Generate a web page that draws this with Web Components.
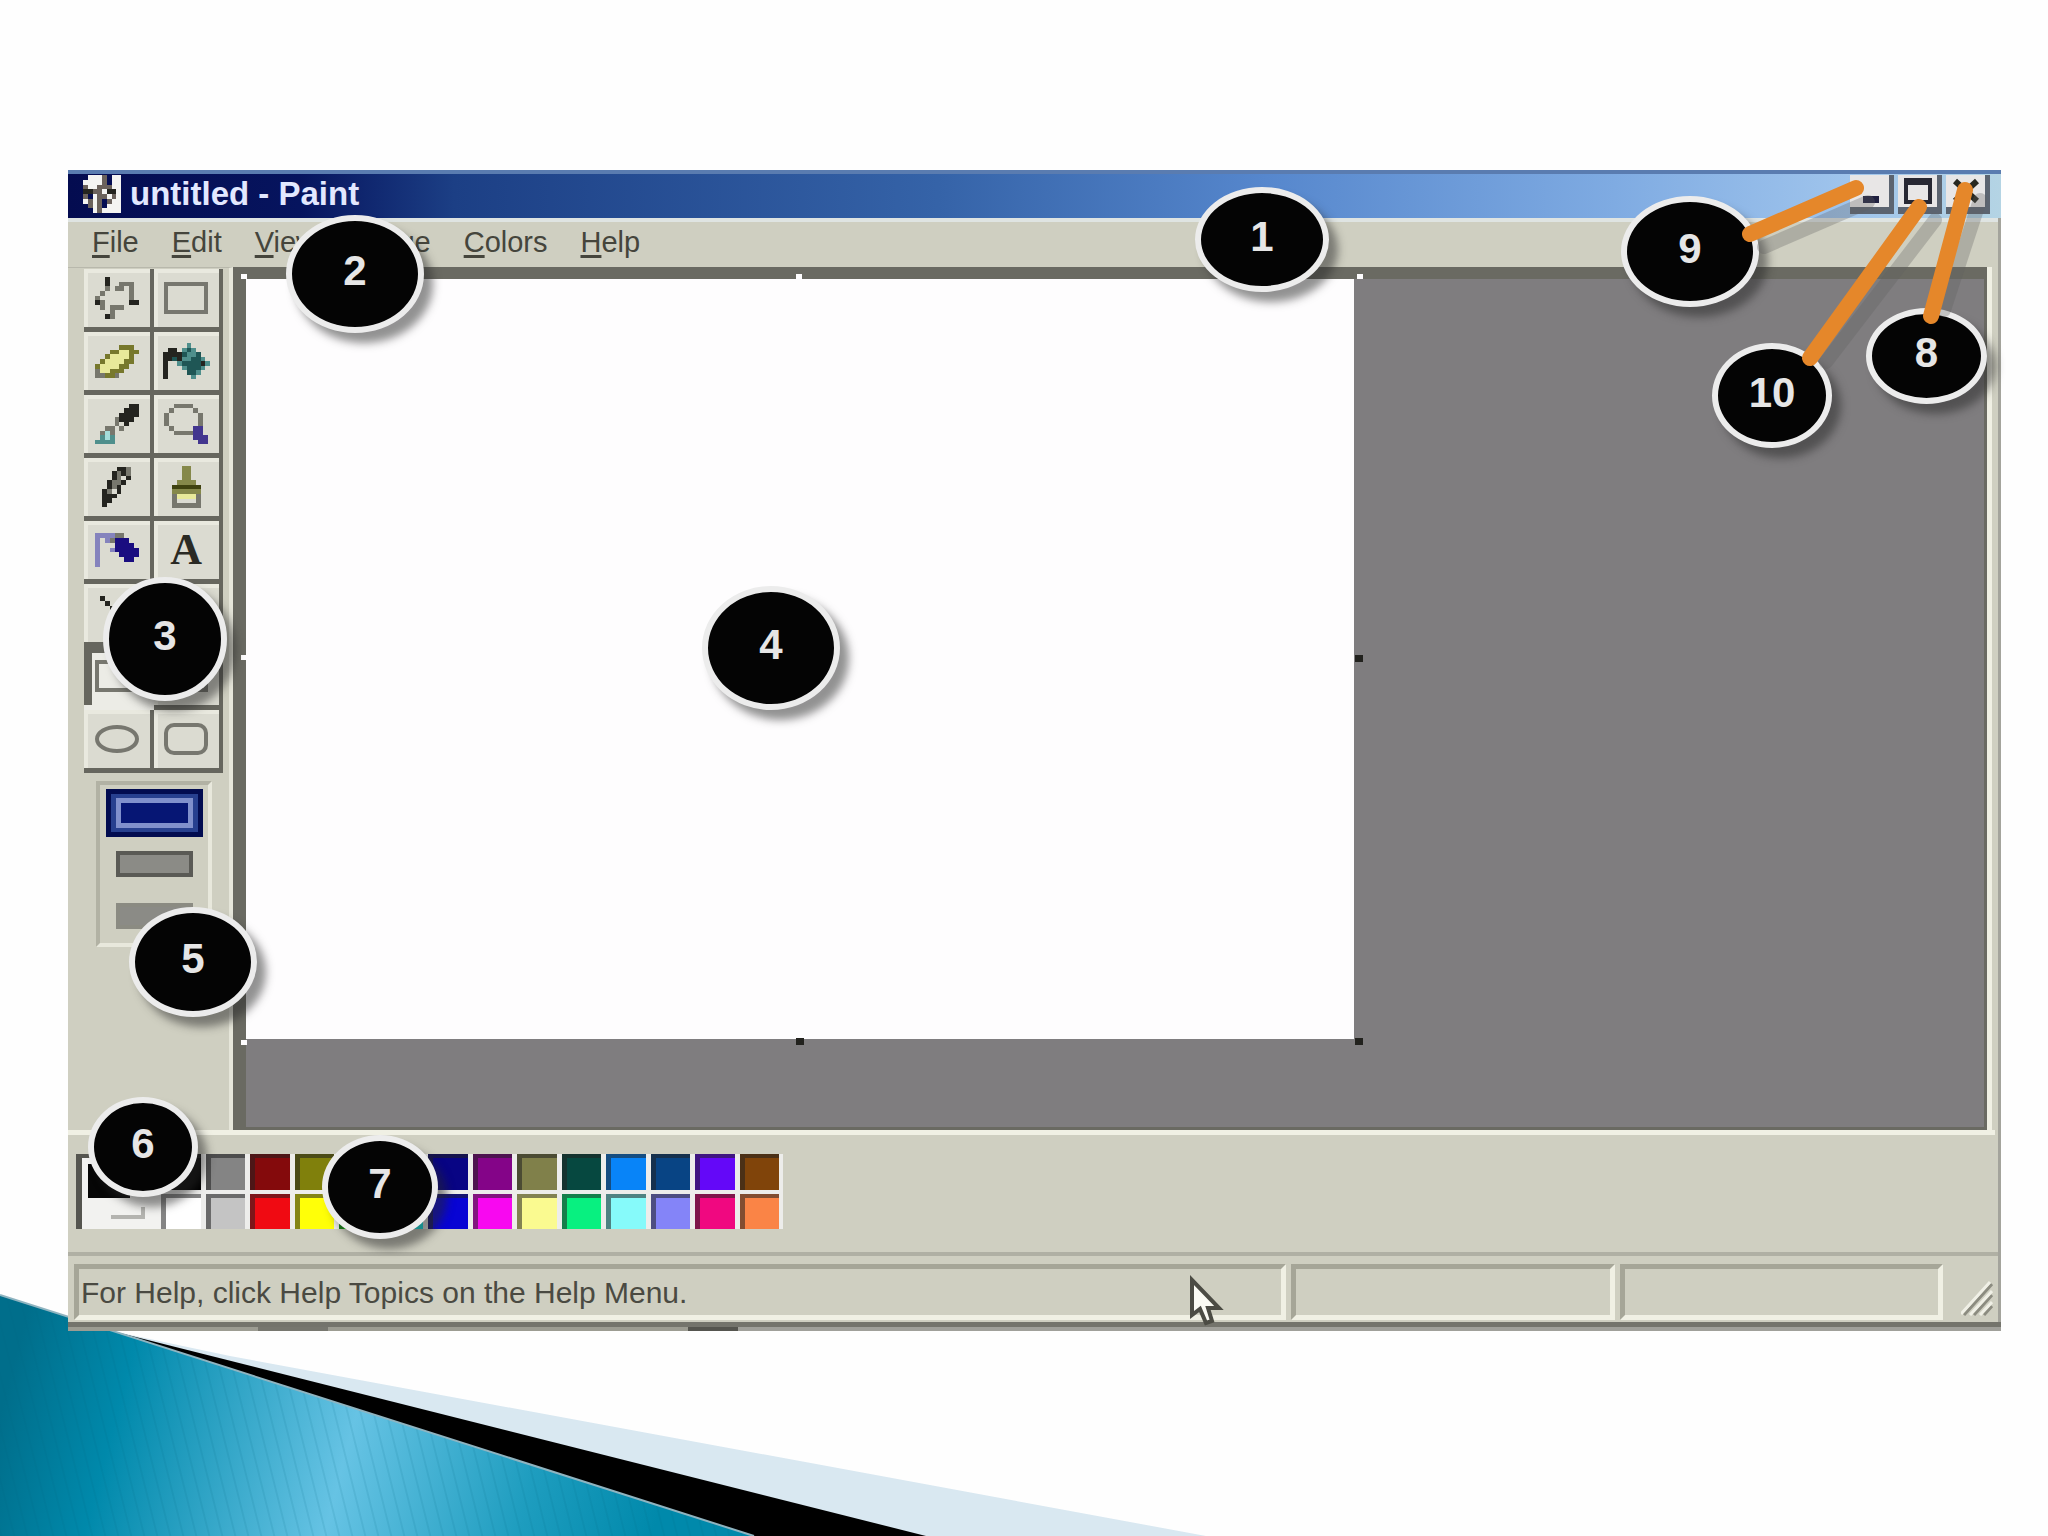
<!DOCTYPE html>
<html lang="en">
<head>
<meta charset="utf-8">
<title>Paint</title>
<style>
  body {
    margin: 0;
    background: #fefefe;
    font-family: "Liberation Sans", Arial, sans-serif;
    --face: #cfcfc1;
    --light: #f0f0e4;
    --shade: #a6a698;
    --dark: #66665e;
  }
</style>
</head>
<body>
<lesson-slide>
  <paint-window>
    <title-bar slot="title">untitled - Paint</title-bar>
    <menu-bar slot="menu"></menu-bar>
    <tool-box slot="tools"></tool-box>
    <paint-canvas slot="canvas"></paint-canvas>
    <color-palette slot="colors"></color-palette>
    <status-bar slot="status">For Help, click Help Topics on the Help Menu.</status-bar>
  </paint-window>
  <callout-layer slot="overlay"></callout-layer>
</lesson-slide>

<script>
const PIXEL_COLORS = {
  k: "#24241f", g: "#77776d", w: "#f4f4f2", y: "#77782c", L: "#e8e99a",
  t: "#4f8f8c", T: "#1f5655", C: "#a4dcda", n: "#43368f", N: "#1a0d80",
  v: "#8583bd", o: "#85884a", O: "#3f4210", b: "#6b625c",
};

// Turns rows of colour letters into crisp rects, one per pixel.
function pixelIcon(rows, width, height) {
  const cols = Math.max(...rows.map((row) => row.length));
  let rects = "";
  rows.forEach((row, y) => {
    [...row].forEach((key, x) => {
      if (PIXEL_COLORS[key]) {
        rects += `<rect x="${x}" y="${y}" width="1" height="1" fill="${PIXEL_COLORS[key]}"/>`;
      }
    });
  });
  return `<svg viewBox="0 0 ${cols} ${rows.length}" width="${width}" height="${height}" preserveAspectRatio="none" shape-rendering="crispEdges" aria-hidden="true">${rects}</svg>`;
}

function outlineIcon(shape, width = 44, height = 32) {
  return `<svg viewBox="0 0 44 32" width="${width}" height="${height}" fill="none" stroke="#77776f" stroke-width="4" aria-hidden="true">${shape}</svg>`;
}

const TOOLS = [
  ["Free-form select", pixelIcon(["..k......", "..k..ggg.", "..g.gg.g.", ".g.....g.", "g......g.", "kg.....kk", ".g.ggg...", "...g.....", "..kg....."], 44, 42)],
  ["Select", outlineIcon('<rect x="2" y="2" width="40" height="28"/>')],
  ["Eraser", pixelIcon([".....yyy.", "...yyLLyy", "..yLLLLy.", ".yLLLLyy.", "yLLLLyy..", "gLLyyy...", "ggyyg...."], 44, 33)],
  ["Fill", pixelIcon([".....t....", ".kk.tTt...", "kkkkTttT..", "kkTkttTTt.", "k..tTTTTkt", "k...tTTTt.", "k....TTt..", "k.....t..."], 47, 36)],
  ["Pick color", pixelIcon([".......kk", "......kkk", ".....kkkk", "....gkkk.", "....g.k..", "..gg.g...", ".gCg.....", ".tCt.....", "tttt....."], 44, 40)],
  ["Magnifier", pixelIcon(["..gggg...", ".g....g..", "g......g.", "g......g.", "g......g.", ".g....nn.", "..ggggnn.", "......nnn", ".......nn"], 44, 40)],
  ["Pencil", pixelIcon(["...kkg", "..kgkg", "..kg.k", ".kggk.", ".kgk..", "kg.k..", "kkk...", "kk....", "k....."], 29, 40)],
  ["Brush", pixelIcon(["..oo..", "..oo..", "..oo..", ".oooo.", "OOOOOO", "oooooo", "gLLLLg", "g....g", "gggggg"], 29, 42)],
  ["Airbrush", pixelIcon(["vvvvgg...", "v.vgNNN..", "v...NNNN.", "v..vNNNNN", "v....NNNN", "v.....NN.", "v........"], 44, 34)],
  ["Text", "<b>A</b>"],
  ["Line", pixelIcon([".k.......", "..k......", "...k.....", "....k....", ".....k...", "......k..", ".......k."], 44, 34)],
  ["Curve", outlineIcon('<path d="M2 2c30 0 10 28 40 28"/>')],
  ["Rectangle", outlineIcon('<rect x="2" y="2" width="40" height="28"/>')],
  ["Polygon", outlineIcon('<path d="M2 2v28h40V14H22V2Z"/>')],
  ["Ellipse", outlineIcon('<ellipse cx="22" cy="16" rx="20" ry="12"/>')],
  ["Rounded rectangle", outlineIcon('<rect x="2" y="2" width="40" height="28" rx="8"/>')],
];

const PALETTE = [
  ["#000000", "#ffffff"], ["#848484", "#c4c4c4"], ["#840a0c", "#f00a12"],
  ["#80800c", "#ffff08"], ["#0a7a0c", "#0af00c"], ["#0a7c80", "#0af0f0"],
  ["#080484", "#0804d4"], ["#840488", "#f808f0"], ["#80804a", "#fafa90"],
  ["#064840", "#08f080"], ["#0884f8", "#86fafa"], ["#084484", "#8484f8"],
  ["#6408f8", "#f00880"], ["#80440a", "#fa8446"],
];

class LessonSlide extends HTMLElement {
  connectedCallback() {
    this.attachShadow({ mode: "open" }).innerHTML = `
      <style>
        :host {
          position: relative;
          display: block;
          box-sizing: border-box;
          min-height: 100vh;
          padding: 170px 47px 0 68px;
          overflow: hidden;
        }
        .swoosh {
          position: absolute;
          bottom: 0;
          left: 0;
        }
        .content { position: relative; }
      </style>
      <svg class="swoosh" width="1210" height="242" viewBox="0 0 1210 242" aria-hidden="true">
        <defs>
          <linearGradient id="teal" gradientUnits="userSpaceOnUse" x1="0" y1="120" x2="640" y2="290">
            <stop offset="0" stop-color="#006e8b"/>
            <stop offset="0.17" stop-color="#0089ab"/>
            <stop offset="0.52" stop-color="#66c3e4"/>
            <stop offset="0.8" stop-color="#1e9dbf"/>
            <stop offset="1" stop-color="#0089ab"/>
          </linearGradient>
          <pattern id="lines" width="13" height="40" patternUnits="userSpaceOnUse" patternTransform="skewX(14)">
            <path d="M6 0v40" stroke="#00627f" stroke-opacity="0.22" stroke-width="1"/>
          </pattern>
        </defs>
        <path fill="#d9e8f1" d="M112 37 230 62 1206 242H750Z"/>
        <path fill="#000" d="M112 37 926 242H750Z"/>
        <path fill="url(#teal)" d="M0 1 754 242H0Z"/>
        <path fill="url(#lines)" d="M0 1 754 242H0Z"/>
        <path fill="none" stroke="#8fb4c0" stroke-width="2" d="M0 1 754 242"/>
      </svg>
      <div class="content">
        <slot></slot>
      </div>
      <slot name="overlay"></slot>
    `;
  }
}

class PaintWindow extends HTMLElement {
  connectedCallback() {
    this.attachShadow({ mode: "open" }).innerHTML = `
      <style>
        :host {
          display: block;
          border-right: 3px solid #a4a49c;
          background: var(--face);
        }
        .work {
          display: grid;
          grid-template-columns: 165px 1fr;
          margin-right: 3px;
          border-bottom: 5px solid var(--light);
        }
        .edge {
          height: 4px;
          margin-right: -3px;
          border-top: 5px solid #74746c;
          background: linear-gradient(90deg, #9c9c92 190px, #77776f 190px 260px, #9c9c92 260px 620px, #55554f 620px 670px, #a0a09a 670px);
        }
      </style>
      <slot name="title"></slot>
      <slot name="menu"></slot>
      <div class="work">
        <slot name="tools"></slot>
        <slot name="canvas"></slot>
      </div>
      <slot name="colors"></slot>
      <slot name="status"></slot>
      <div class="edge"></div>
    `;
  }
}

class TitleBar extends HTMLElement {
  connectedCallback() {
    const mark = pixelIcon([".wwwb.ww", "wwwwb.ww", "bwwbbbww", "kkbbwkkw", "b.wbbwbw", "wbwb.bww", ".bwb.www", "..wbwwww"], 38, 38);
    this.attachShadow({ mode: "open" }).innerHTML = `
      <style>
        :host {
          display: flex;
          box-sizing: border-box;
          height: 48px;
          align-items: center;
          margin-right: -3px;
          padding: 0 11px 4px 15px;
          border-top: 4px solid #5a7cb0;
          background: linear-gradient(90deg, #040c50, #06145e 12%, #1c3f85 20%, #3563a8 45%, #5687cd 62%, #7fabe2 80%, #9fc4ec 92%, #b4d4e4);
          color: #e2e8ff;
        }
        svg { display: block; }
        .title {
          flex: 1;
          margin-left: 9px;
          font-size: 33px;
          font-weight: bold;
          line-height: 40px;
        }
        .controls {
          display: flex;
          gap: 4px;
        }
        button {
          display: grid;
          width: 44px;
          height: 39px;
          padding: 0;
          place-items: center;
          border: 0;
          border-right: 5px solid #5c6470;
          border-bottom: 7px solid #5c6470;
          background: #e8e6e6;
        }
      </style>
      ${mark}
      <span class="title"><slot></slot></span>
      <div class="controls">
        <button aria-label="Minimize"><svg width="28" height="26"><path fill="#202040" d="M7 18h16v7H7z"/></svg></button>
        <button aria-label="Maximize"><svg width="28" height="26"><path fill="#282833" d="M0 0h28v26H0zM4 7v15h20V7z" fill-rule="evenodd"/></svg></button>
        <button aria-label="Close"><svg width="28" height="26"><path stroke="#282820" stroke-width="6" d="M3 3 25 23M25 3 3 23"/></svg></button>
      </div>
    `;
  }
}

class MenuBar extends HTMLElement {
  connectedCallback() {
    const items = ["File", "Edit", "View", "Image", "Colors", "Help"];
    this.attachShadow({ mode: "open" }).innerHTML = `
      <style>
        :host {
          display: flex;
          box-sizing: border-box;
          height: 49px;
          align-items: flex-start;
          gap: 33px;
          padding-left: 24px;
          border-top: 4px solid #dfe4e2;
        }
        button {
          padding: 0;
          border: 0;
          background: none;
          color: #45453c;
          font: 29px/40px "Liberation Sans", Arial, sans-serif;
        }
        u {
          text-decoration-thickness: 3px;
          text-underline-offset: 3px;
        }
      </style>
      ${items.map((name) => `<button><u>${name[0]}</u>${name.slice(1)}</button>`).join("")}
    `;
  }
}

class ToolBox extends HTMLElement {
  connectedCallback() {
    const buttons = TOOLS.map(([name, icon]) =>
      `<button aria-label="${name}" aria-pressed="${name === "Rectangle"}">${icon}</button>`).join("");
    this.attachShadow({ mode: "open" }).innerHTML = `
      <style>
        :host {
          display: block;
          padding: 1px 6px 0 16px;
          border-top: 1px solid #b8b8ac;
          border-right: 4px solid #e6e6da;
        }
        .tools {
          display: grid;
          grid-template-columns: repeat(2, 1fr);
          grid-auto-rows: 63px;
        }
        button {
          display: grid;
          place-items: center;
          padding: 0;
          border: 0;
          background: none;
        }
        .tools button {
          border: solid var(--dark);
          border-width: 0 4px 5px 0;
          background: #dbdbd1;
          box-shadow: inset 4px 4px #e9e9df;
        }
        .tools button[aria-pressed="true"] {
          border-color: #ecece6;
          background: #ecece6;
          box-shadow: inset 8px 6px var(--dark);
        }
        svg { display: block; }
        b {
          color: #2a2a24;
          font: bold 44px/50px "Liberation Serif", "Times New Roman", serif;
        }
        .styles {
          display: grid;
          box-sizing: border-box;
          width: 116px;
          height: 166px;
          align-content: start;
          justify-items: center;
          gap: 14px;
          margin: 8px 0 0 12px;
          padding-top: 4px;
          border: 4px solid;
          border-color: #b2b2a4 #e8e8dc #e8e8dc #b2b2a4;
        }
        .styles button {
          width: 77px;
          height: 26px;
          border: 4px solid #5a5a55;
          background: #8b8b86;
        }
        .styles .outline {
          width: 97px;
          height: 48px;
          border: 5px solid #020c50;
          background: #27408f;
        }
        .outline span {
          width: 67px;
          height: 20px;
          border: 5px solid #8090cc;
          background: #061674;
        }
        .styles .solid {
          margin-top: 12px;
          border-color: #8b8b82;
        }
      </style>
      <div class="tools">${buttons}</div>
      <div class="styles">
        <button class="outline" aria-label="Outline"><span></span></button>
        <button aria-label="Outline and fill"></button>
        <button class="solid" aria-label="Fill only"></button>
      </div>
    `;
  }
}

class PaintCanvas extends HTMLElement {
  connectedCallback() {
    this.attachShadow({ mode: "open" }).innerHTML = `
      <style>
        :host {
          display: block;
          padding-bottom: 88px;
          border: solid #6a6a62;
          border-width: 12px 3px 3px 13px;
          background: #7f7d7f;
          box-shadow: 5px 0 var(--light);
          margin-right: 8px;
        }
        .page {
          position: relative;
          width: 1108px;
          height: 760px;
          background: #fefdfe;
        }
        i {
          position: absolute;
          width: 8px;
          height: 7px;
          background: #22221e;
        }
        .e { right: -9px; }
        .s { bottom: -6px; }
        .mid-x { left: 550px; }
        .mid-y { top: 376px; }
        .light {
          width: 6px;
          height: 5px;
          background: #fefdfe;
        }
        .n { top: -5px; }
        .w { left: -5px; }
      </style>
      <div class="page">
        <i class="light n w"></i><i class="light n mid-x"></i><i class="light n e"></i>
        <i class="light w mid-y"></i><i class="e mid-y"></i>
        <i class="light w s"></i><i class="s mid-x"></i><i class="s e"></i>
      </div>
    `;
  }
}

class ColorPalette extends HTMLElement {
  connectedCallback() {
    const row = (index) => PALETTE.map((pair) =>
      `<button aria-label="Color ${pair[index]}" style="--swatch: ${pair[index]}"></button>`).join("");
    this.attachShadow({ mode: "open" }).innerHTML = `
      <style>
        :host {
          display: flex;
          height: 75px;
          padding: 19px 8px 23px;
          border-bottom: 4px solid #b0b0a4;
        }
        .current {
          position: relative;
          box-sizing: border-box;
          width: 85px;
          border: solid #55554f;
          border-width: 4px 0 0 6px;
          background: #f2f2f0;
        }
        .fore, .back {
          position: absolute;
          width: 42px;
          height: 34px;
        }
        .fore { top: 6px; left: 6px; background: #060606; }
        .back { right: 16px; bottom: 10px; width: 34px; height: 12px; box-sizing: border-box; border: solid #b4b4b0; border-width: 0 4px 4px 0; }
        .swatches {
          display: grid;
          width: 618px;
          grid-template-columns: repeat(14, 1fr);
          gap: 4px 5px;
          padding-right: 4px;
          background: #ededeb;
        }
        button {
          padding: 0;
          border: solid color-mix(in srgb, var(--swatch) 45%, #202020);
          border-width: 4px 0 0 5px;
          background: var(--swatch);
        }
      </style>
      <div class="current"><span class="back"></span><span class="fore"></span></div>
      <div class="swatches">${row(0)}${row(1)}</div>
    `;
  }
}

class StatusBar extends HTMLElement {
  connectedCallback() {
    this.attachShadow({ mode: "open" }).innerHTML = `
      <style>
        :host {
          display: grid;
          grid-template-columns: 1212px 1fr 1fr 45px;
          gap: 5px;
          padding: 8px 5px 2px 6px;
        }
        div {
          box-sizing: border-box;
          height: 56px;
          padding-left: 2px;
          border: 5px solid;
          border-color: var(--shade) var(--light) var(--light) var(--shade);
          color: #4a4a42;
          font-size: 30px;
          line-height: 48px;
          white-space: nowrap;
        }
        svg {
          align-self: end;
          justify-self: end;
          margin-bottom: 4px;
        }
      </style>
      <div role="status"><slot></slot></div>
      <div></div>
      <div></div>
      <svg width="32" height="36" viewBox="0 0 32 36" stroke-width="3" aria-hidden="true">
        <path stroke="#8c8c80" d="M3 35 31 4M13 35 31 15M23 35 31 26"/>
        <path stroke="#f0f0e6" d="M0 34 29 2M9 35 31 11M19 35 31 22"/>
      </svg>
    `;
  }
}

// Numbered badges pinned over the parts of the window: label, left, top, width, height.
const CALLOUTS = [
  [1, 1195, 187, 134, 105], [2, 286, 215, 138, 118], [3, 103, 577, 124, 124],
  [4, 702, 586, 138, 124], [5, 129, 907, 128, 110], [6, 88, 1097, 110, 100],
  [7, 322, 1135, 116, 104], [8, 1866, 308, 121, 96], [9, 1621, 196, 138, 111],
  [10, 1712, 343, 120, 105],
];

class CalloutLayer extends HTMLElement {
  connectedCallback() {
    const badges = CALLOUTS.map(([label, left, top, width, height]) =>
      `<span style="left: ${left}px; top: ${top}px; width: ${width}px; height: ${height}px">${label}</span>`).join("");
    this.attachShadow({ mode: "open" }).innerHTML = `
      <style>
        :host {
          position: absolute;
          inset: 0;
          pointer-events: none;
        }
        span {
          position: absolute;
          display: grid;
          box-sizing: border-box;
          place-items: center;
          padding-bottom: 6px;
          border: 6px solid #ececec;
          border-radius: 50%;
          background: #040404;
          box-shadow: 9px 10px 8px rgba(40, 40, 40, 0.5);
          color: #e6e6e6;
          font-size: 42px;
          font-weight: bold;
          line-height: 44px;
        }
        svg {
          position: absolute;
          top: 0;
          left: 0;
        }
      </style>
      ${badges}
      <svg width="2048" height="1536" aria-hidden="true">
        <g stroke-linecap="round" stroke-width="14" fill="none">
          <path stroke="#606060" stroke-opacity="0.3" d="M1764 247 1868 202M1826 362 1935 220M1944 310 1980 200"/>
          <path stroke="#e5872a" stroke-width="16" d="M1750 234 1856 188M1810 358 1919 207M1931 316 1965 190"/>
        </g>
        <path fill="#fbfbf4" stroke="#4c4c44" stroke-width="4" d="M1192 1280v35l8-6 6 14 6-2-4-13h11Z"/>
      </svg>
    `;
  }
}

customElements.define("lesson-slide", LessonSlide);
customElements.define("paint-window", PaintWindow);
customElements.define("title-bar", TitleBar);
customElements.define("menu-bar", MenuBar);
customElements.define("tool-box", ToolBox);
customElements.define("paint-canvas", PaintCanvas);
customElements.define("color-palette", ColorPalette);
customElements.define("status-bar", StatusBar);
customElements.define("callout-layer", CalloutLayer);
</script>
</body>
</html>
